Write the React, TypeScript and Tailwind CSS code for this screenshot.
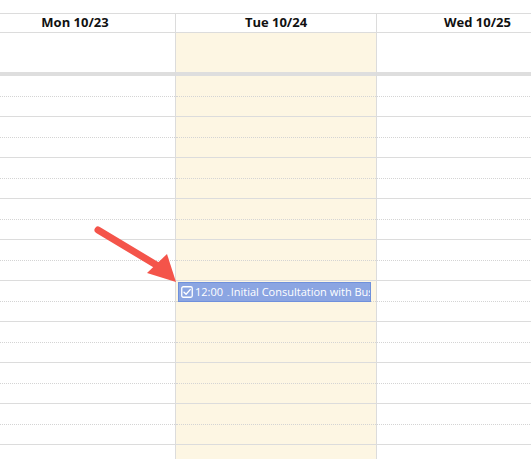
import React from 'react';

const days = [
  { label: 'Mon 10/23', today: false },
  { label: 'Tue 10/24', today: true },
  { label: 'Wed 10/25', today: false },
];

const slots = Array.from({ length: 19 }, (_, i) => i);

function CheckIcon() {
  return (
    <svg width="12" height="12" viewBox="0 0 12 12" className="shrink-0">
      <rect x="0.75" y="0.75" width="10.5" height="10.5" rx="1.5" fill="none" stroke="#fff" strokeWidth="1.3" />
      <path d="M3 6.2 L5.1 8.2 L9.2 3.6" fill="none" stroke="#fff" strokeWidth="1.4" strokeLinecap="round" strokeLinejoin="round" />
    </svg>
  );
}

function Column({ label, today, last }: { label: string; today: boolean; last: boolean }) {
  return (
    <div className={`relative w-[201px] shrink-0 flex flex-col ${last ? '' : 'border-r border-[#dcdcdc]'}`}>
      <div className="h-[20px] border-t border-b border-[#dcdcdc] bg-white flex items-center justify-center text-[13px] font-bold text-[#111]">
        {label}
      </div>
      <div className={`h-[39px] ${today ? 'bg-[#fdf6e3]' : 'bg-white'}`} />
      <div className="h-[4px] bg-[#dedede]" />
      <div className={today ? 'bg-[#fdf6e3]' : 'bg-white'}>
        {slots.map((i) => (
          <div
            key={i}
            className={`h-[20.5px] border-b ${i % 2 === 0 ? 'border-dotted border-[#d4d4d4]' : 'border-solid border-[#dcdcdc]'}`}
          />
        ))}
      </div>
      {today && (
        <div className="absolute left-[2px] top-[269px] w-[193px] h-[20px] bg-[#8ba5e2] border border-[#6f90dc] flex items-center pl-[2px] overflow-hidden whitespace-nowrap text-white text-[11px]">
          <CheckIcon />
          <span className="ml-[2px]">12:00</span>
          <span className="ml-[4px] text-[8px] leading-none mt-[3px]">-</span>
          <span className="ml-px">Initial Consultation with Business Owner</span>
        </div>
      )}
    </div>
  );
}

export default function App() {
  return (
    <div className="relative w-[531px] h-[459px] overflow-hidden bg-white font-['Open_Sans',sans-serif]">
      <div className="pt-[13px] ml-[-25px] flex">
        {days.map((d, i) => (
          <Column key={d.label} label={d.label} today={d.today} last={i === days.length - 1} />
        ))}
      </div>
      <svg className="absolute inset-0 pointer-events-none" width="531" height="459" viewBox="0 0 531 459">
        <line x1="98" y1="230" x2="158" y2="266" stroke="#f4544a" strokeWidth="7" strokeLinecap="round" />
        <polygon points="176,282 147,273 167,254" fill="#f4544a" />
      </svg>
    </div>
  );
}
